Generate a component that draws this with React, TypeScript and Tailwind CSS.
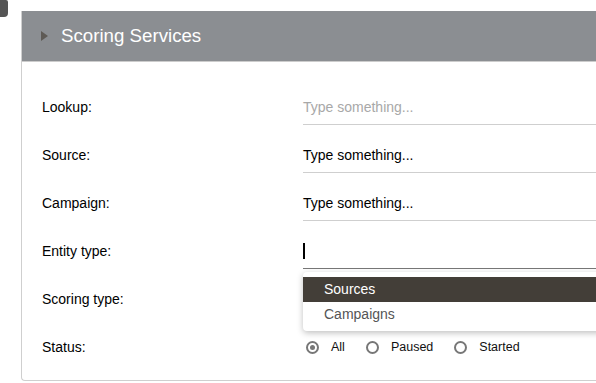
import React from "react";

const rows = [
  { label: "Lookup:", kind: "placeholder" },
  { label: "Source:", kind: "text" },
  { label: "Campaign:", kind: "text" },
  { label: "Entity type:", kind: "focus" },
  { label: "Scoring type:", kind: "empty" },
  { label: "Status:", kind: "radio" },
];

function Radio({ label, checked }: { label: string; checked?: boolean }) {
  return (
    <div className="flex items-center mr-[21px]">
      <span className="w-[13px] h-[13px] rounded-full border-2 border-[#777] flex items-center justify-center">
        {checked && <span className="w-[5px] h-[5px] rounded-full bg-[#777]" />}
      </span>
      <span className="ml-[12px] text-[12.5px] text-[#111]">{label}</span>
    </div>
  );
}

function Field({ kind }: { kind: string }) {
  if (kind === "radio") {
    return (
      <div className="flex items-center h-full pl-[3px]">
        <Radio label="All" checked />
        <Radio label="Paused" />
        <Radio label="Started" />
      </div>
    );
  }
  if (kind === "empty") return <div className="h-full" />;
  const focused = kind === "focus";
  return (
    <div
      className={`relative h-full flex items-center border-b ${
        focused ? "border-[#777]" : "border-[#cfcfcf]"
      }`}
    >
      {kind === "placeholder" && (
        <span className="text-[14px] text-[#a8a8a8]">Type something...</span>
      )}
      {kind === "text" && (
        <span className="text-[14px] text-black">Type something...</span>
      )}
      {focused && (
        <>
          <span className="w-[2px] h-[16px] bg-black" />
          <div className="absolute left-0 top-[38px] w-[320px] bg-white rounded shadow-[0_2px_6px_rgba(0,0,0,0.25)] pt-[5px] pb-[4px] z-10">
            <div className="h-[25px] flex items-center pl-[21px] bg-[#433e38] text-white text-[14px]">
              Sources
            </div>
            <div className="h-[25px] flex items-center pl-[21px] text-[#555] text-[14px]">
              Campaigns
            </div>
          </div>
        </>
      )}
    </div>
  );
}

export default function App() {
  return (
    <div
      className="w-[596px] h-[383px] overflow-hidden bg-white flex items-start"
      style={{ fontFamily: '"Liberation Sans", Arial, sans-serif' }}
    >
      <div className="w-[8px] h-[17px] bg-[#555] rounded-br-[4px] rounded-tr-[2px] shrink-0" />
      <div className="ml-[13px] mt-[11px] w-[620px] shrink-0 border-l border-b border-[#cfcfcf] rounded-bl-[4px]">
        <div className="h-[51px] bg-[#8b8e92] border-b border-[#cccccc] flex items-center pl-[19px]">
          <svg width="7" height="10" viewBox="0 0 7 10" className="mr-[13px]">
            <polygon points="0,0 7,5 0,10" fill="#5e5a55" />
          </svg>
          <span className="text-white text-[18.7px]">Scoring Services</span>
        </div>
        <div className="pt-[28px] pb-[15px]">
          {rows.map((r) => (
            <div key={r.label} className="flex h-[35px] mb-[13px] last:mb-0">
              <div className="w-[281px] pl-[20px] flex items-center text-[14px] text-black">
                {r.label}
              </div>
              <div className="flex-1">
                <Field kind={r.kind} />
              </div>
            </div>
          ))}
        </div>
      </div>
    </div>
  );
}
